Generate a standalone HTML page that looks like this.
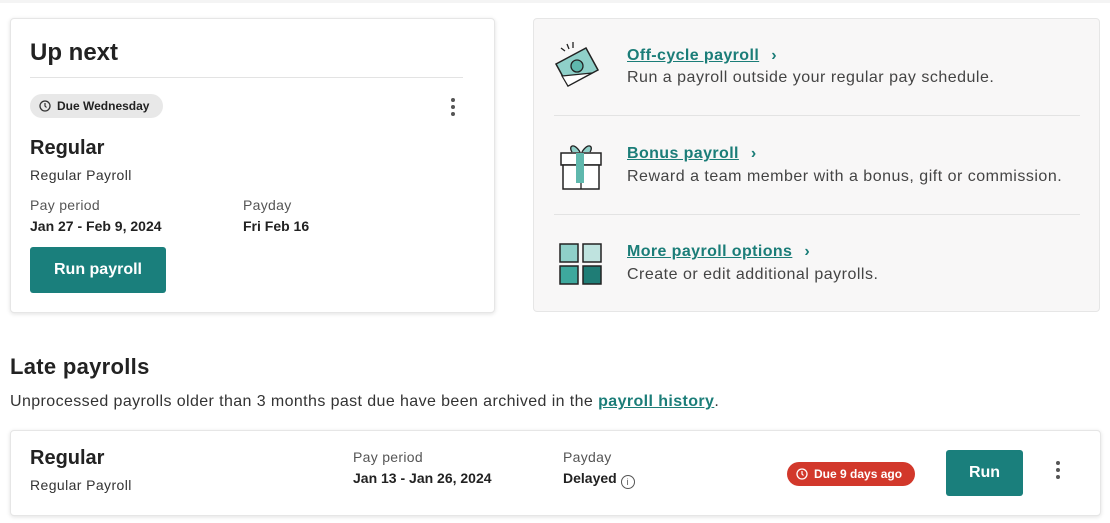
<!DOCTYPE html><html><head><style>
body{margin:0;width:1110px;height:523px;background:#fff;font-family:"Liberation Sans",sans-serif;color:#222;position:relative;overflow:hidden}
.a{position:absolute;white-space:nowrap}
.card{position:absolute;background:#fff;border:1px solid #e6e6e6;border-radius:4px;box-shadow:0 1px 4px rgba(0,0,0,.12)}
.b{font-weight:bold}
.lnk{color:#1b7d78;font-weight:bold;text-decoration:underline}
.r .lnk{font-size:16px;letter-spacing:.4px}
.chev{color:#1b7d78;font-weight:bold;text-decoration:none;margin-left:12px;display:inline-block}
.g{color:#444;font-size:16px;letter-spacing:.5px}
.btn{position:absolute;background:#1a7f7c;color:#fff;font-weight:bold;border-radius:3px;text-align:center}
.dots{position:absolute;width:4px}
.dots i{display:block;width:4px;height:4px;border-radius:2px;background:#555;margin-bottom:3px}
</style></head><body>
<div style="position:absolute;left:0;top:0;width:1110px;height:3px;background:#f4f4f4"></div>
<div class="card" style="left:10px;top:18px;width:483px;height:293px"></div>
<div class="a b" style="left:30px;top:39px;font-size:24px">Up next</div>
<div class="a" style="left:30px;top:77px;width:433px;height:1px;background:#e3e3e3"></div>
<div class="a b" style="left:30px;top:94px;width:133px;height:24px;background:#e8e8e8;border-radius:12px;font-size:12px;line-height:24px">
<svg style="position:absolute;left:9px;top:6px" width="12" height="12" viewBox="0 0 12 12"><circle cx="6" cy="6" r="5" fill="none" stroke="#333" stroke-width="1.3"/><path d="M6 3v3l1.5 1.5" fill="none" stroke="#333" stroke-width="1.2"/></svg>
<span style="position:absolute;left:27px">Due Wednesday</span></div>
<div class="dots" style="left:451px;top:98px"><i></i><i></i><i></i></div>
<div class="a b" style="left:30px;top:137px;font-size:20px">Regular</div>
<div class="a" style="left:30px;top:167px;font-size:14px;color:#333;letter-spacing:.4px">Regular Payroll</div>
<div class="a" style="left:30px;top:197px;font-size:14px;color:#555;letter-spacing:.3px">Pay period</div>
<div class="a b" style="left:30px;top:218px;font-size:14px">Jan 27 - Feb 9, 2024</div>
<div class="a" style="left:243px;top:197px;font-size:14px;color:#555;letter-spacing:.3px">Payday</div>
<div class="a b" style="left:243px;top:218px;font-size:14px">Fri Feb 16</div>
<div class="btn" style="left:30px;top:247px;width:136px;height:46px;line-height:46px;font-size:16px">Run payroll</div>

<div style="position:absolute;left:533px;top:18px;width:567px;height:294px;background:#f8f7f7;border:1px solid #e6e6e6;border-radius:4px;box-sizing:border-box"></div>
<div class="a" style="left:554px;top:115px;width:526px;height:1px;background:#e3e3e3"></div>
<div class="a" style="left:554px;top:214px;width:526px;height:1px;background:#e3e3e3"></div>
<div class="r">
<svg class="a" style="left:552px;top:40px" width="50" height="50" viewBox="0 0 50 50"><path d="M4 24 L34 8 L46 30 L16 46 Z" fill="#8fd0c9" stroke="#222" stroke-width="1.5"/><path d="M10 36 L16 46 L40 33 Z" fill="#fff" stroke="#222" stroke-width="1.2"/><circle cx="25" cy="26" r="6" fill="#5fb8ad" stroke="#222" stroke-width="1.3"/><path d="M15 4l2 5M21 2v6M9 8l4 3" stroke="#222" stroke-width="1.3"/></svg>
<div class="a lnk" style="left:627px;top:47px">Off-cycle payroll<span class="chev">›</span></div>
<div class="a g" style="left:627px;top:69px">Run a payroll outside your regular pay schedule.</div>
<svg class="a" style="left:558px;top:140px" width="46" height="52" viewBox="0 0 46 52"><rect x="3" y="13" width="40" height="12" fill="#fff" stroke="#222" stroke-width="1.5"/><rect x="5" y="25" width="36" height="24" fill="#fff" stroke="#222" stroke-width="1.5"/><line x1="23" y1="13" x2="23" y2="49" stroke="#222" stroke-width="1.3"/><rect x="18" y="13" width="8" height="30" fill="#5fb8ad"/><path d="M22 12c-6-10-12-6-8 0M24 12c6-10 12-6 8 0" fill="#8fd0c9" stroke="#222" stroke-width="1.3"/></svg>
<div class="a lnk" style="left:627px;top:145px">Bonus payroll<span class="chev">›</span></div>
<div class="a g" style="left:627px;top:168px">Reward a team member with a bonus, gift or commission.</div>
<svg class="a" style="left:559px;top:243px" width="44" height="42" viewBox="0 0 44 42"><rect x="1" y="1" width="18" height="18" fill="#8fd0c9" stroke="#222" stroke-width="1.5"/><rect x="24" y="1" width="18" height="18" fill="#bfe3df" stroke="#222" stroke-width="1.5"/><rect x="1" y="23" width="18" height="18" fill="#3ea89d" stroke="#222" stroke-width="1.5"/><rect x="24" y="23" width="18" height="18" fill="#1f7d76" stroke="#222" stroke-width="1.5"/></svg>
<div class="a lnk" style="left:627px;top:243px">More payroll options<span class="chev">›</span></div>
<div class="a g" style="left:627px;top:266px">Create or edit additional payrolls.</div>
</div>

<div class="a b" style="left:10px;top:354px;font-size:22px;letter-spacing:.3px">Late payrolls</div>
<div class="a" style="left:10px;top:393px;font-size:16px;color:#333;letter-spacing:.4px">Unprocessed payrolls older than 3 months past due have been archived in the <span class="lnk">payroll history</span>.</div>
<div class="card" style="left:10px;top:430px;width:1089px;height:84px"></div>
<div class="a b" style="left:30px;top:447px;font-size:20px">Regular</div>
<div class="a" style="left:30px;top:477px;font-size:14px;color:#333;letter-spacing:.4px">Regular Payroll</div>
<div class="a" style="left:353px;top:449px;font-size:14px;color:#555;letter-spacing:.3px">Pay period</div>
<div class="a b" style="left:353px;top:470px;font-size:14px">Jan 13 - Jan 26, 2024</div>
<div class="a" style="left:563px;top:449px;font-size:14px;color:#555;letter-spacing:.3px">Payday</div>
<div class="a b" style="left:563px;top:470px;font-size:14px">Delayed <span style="display:inline-block;width:12px;height:12px;border:1px solid #555;border-radius:7px;font-size:9px;line-height:12px;text-align:center;color:#555;font-weight:normal;vertical-align:-2px">i</span></div>
<div class="a b" style="left:787px;top:462px;width:128px;height:24px;background:#d2382b;color:#fff;border-radius:12px;font-size:12px;line-height:24px">
<svg style="position:absolute;left:9px;top:6px" width="12" height="12" viewBox="0 0 12 12"><circle cx="6" cy="6" r="5" fill="none" stroke="#fff" stroke-width="1.3"/><path d="M6 3v3l1.5 1.5" fill="none" stroke="#fff" stroke-width="1.2"/></svg>
<span style="position:absolute;left:27px">Due 9 days ago</span></div>
<div class="btn" style="left:946px;top:450px;width:77px;height:46px;line-height:46px;font-size:16px">Run</div>
<div class="dots" style="left:1056px;top:461px"><i></i><i></i><i></i></div>
</body></html>
